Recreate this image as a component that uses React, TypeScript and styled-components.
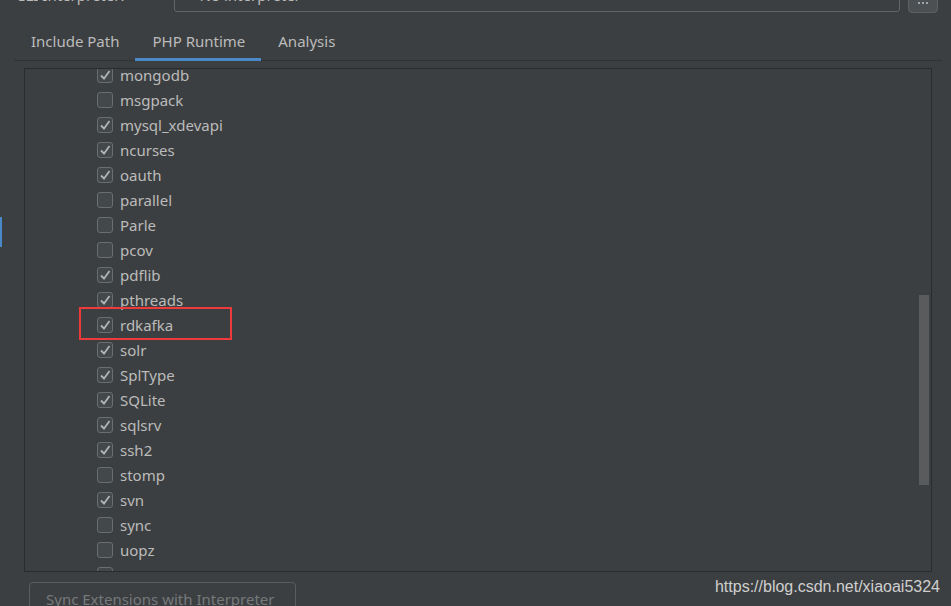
import React from 'react'
import styled, { createGlobalStyle } from 'styled-components'

const GlobalStyle = createGlobalStyle`
  html, body {
    margin: 0;
    padding: 0;
    background: #3c3f41;
    overflow: hidden;
  }
  #root {
    height: 606px;
  }
`

const Page = styled.div`
  position: relative;
  display: flex;
  flex-direction: column;
  width: 951px;
  height: 606px;
  overflow: hidden;
  background: #3c3f41;
  color: #bbbbbb;
  font-family: 'Noto Sans', 'Open Sans', sans-serif;
  font-size: 15px;
`

const TopRow = styled.div`
  display: flex;
  align-items: flex-end;
  height: 34px;
  margin-top: -22px;
  padding-left: 16px;
  flex-shrink: 0;
`

const Label = styled.span`
  width: 158px;
  line-height: 34px;
`

const Combo = styled.div`
  display: flex;
  align-items: center;
  justify-content: space-between;
  width: 726px;
  height: 34px;
  box-sizing: border-box;
  border: 1px solid #646464;
  border-radius: 3px;
  padding: 0 10px 0 16px;
  color: #bbbbbb;
`

const DotsButton = styled.div`
  width: 30px;
  height: 34px;
  margin-left: 8px;
  margin-bottom: -1px;
  box-sizing: border-box;
  border: 1px solid #5e6163;
  border-radius: 4px;
  background: #4c5052;
  display: flex;
  align-items: flex-end;
  justify-content: center;
  padding-bottom: 8px;
  gap: 2px;
`

const Dot = styled.span`
  width: 2px;
  height: 2px;
  background: #9aa7b0;
`

const TabBar = styled.div`
  display: flex;
  align-items: flex-end;
  margin: 15px 9px 0 14px;
  height: 33px;
  border-bottom: 1px solid #323232;
  flex-shrink: 0;
`

const Tab = styled.div<{ $active?: boolean }>`
  padding: 0 16px 4px 17px;
  line-height: 26px;
  color: #bbbbbb;
  border-bottom: 3px solid ${(p) => (p.$active ? '#4a88c7' : 'transparent')};
  margin-bottom: -1px;
`

const Panel = styled.div`
  display: flex;
  margin: 7px 0 0 24px;
  width: 908px;
  height: 504px;
  box-sizing: border-box;
  border: 1px solid #2b2b2b;
  overflow: hidden;
  flex-shrink: 0;
`

const List = styled.div`
  flex: 1;
  display: flex;
  flex-direction: column;
  margin-top: -7px;
  padding-left: 72px;
`

const Row = styled.div`
  display: flex;
  align-items: center;
  gap: 7px;
  height: 25px;
  flex-shrink: 0;
`

const Box = styled.span`
  display: inline-flex;
  align-items: center;
  justify-content: center;
  width: 16px;
  height: 16px;
  box-sizing: border-box;
  border: 1px solid #6b6e70;
  border-radius: 3px;
  background: #43494a;
`

const RowWrap = styled.div`
  position: relative;
`

/* red annotation frame drawn over the rdkafka row */
const Highlight = styled.div`
  position: absolute;
  left: -18px;
  top: -5px;
  width: 153px;
  height: 33px;
  box-sizing: border-box;
  border: 2px solid #ee3a3a;
`

const Track = styled.div`
  width: 12px;
  display: flex;
  flex-direction: column;
`

const Thumb = styled.div`
  width: 10px;
  height: 190px;
  margin-top: 226px;
  background: #595b5d;
`

const Footer = styled.div`
  display: flex;
  align-items: flex-start;
  justify-content: space-between;
  padding: 10px 11px 0 29px;
`

const SyncButton = styled.div`
  width: 267px;
  height: 34px;
  box-sizing: border-box;
  border: 1px solid #5a5d5f;
  border-radius: 4px;
  padding-left: 16px;
  line-height: 32px;
  color: #75797b;
`

const Watermark = styled.span`
  font-family: 'Liberation Sans', Arial, sans-serif;
  font-size: 16px;
  color: #cfcfcf;
  margin-top: -4px;
`

/* selection marker of the settings tree, peeking in at the left edge */
const LeftMark = styled.div`
  position: absolute;
  left: 0;
  top: 217px;
  width: 2px;
  height: 30px;
  background: #4a88c7;
`

const items: [string, boolean][] = [
  ['mongodb', true],
  ['msgpack', false],
  ['mysql_xdevapi', true],
  ['ncurses', true],
  ['oauth', true],
  ['parallel', false],
  ['Parle', false],
  ['pcov', false],
  ['pdflib', true],
  ['pthreads', true],
  ['rdkafka', true],
  ['solr', true],
  ['SplType', true],
  ['SQLite', true],
  ['sqlsrv', true],
  ['ssh2', true],
  ['stomp', false],
  ['svn', true],
  ['sync', false],
  ['uopz', false],
  ['', false],
]

function Check() {
  return (
    <svg width="12" height="12" viewBox="0 0 12 12">
      <polyline points="2,6.5 5,9.5 10.5,2" fill="none" stroke="#b0b4b7" strokeWidth="1.8" />
    </svg>
  )
}

function Item({ name, checked }: { name: string; checked: boolean }) {
  return (
    <Row>
      <Box>{checked && <Check />}</Box>
      <span>{name}</span>
    </Row>
  )
}

export default function App() {
  return (
    <Page>
      <GlobalStyle />
      <LeftMark />
      <TopRow>
        <Label>CLI Interpreter:</Label>
        <Combo>
          <span>&lt;No interpreter&gt;</span>
          <svg width="10" height="6" viewBox="0 0 10 6">
            <polyline points="1,1 5,5 9,1" fill="none" stroke="#9a9a9a" strokeWidth="1.3" />
          </svg>
        </Combo>
        <DotsButton>
          <Dot />
          <Dot />
          <Dot />
        </DotsButton>
      </TopRow>
      <TabBar>
        <Tab>Include Path</Tab>
        <Tab $active>PHP Runtime</Tab>
        <Tab>Analysis</Tab>
      </TabBar>
      <Panel>
        <List>
          {items.map(([name, checked]) =>
            name === 'rdkafka' ? (
              <RowWrap key={name}>
                <Item name={name} checked={checked} />
                <Highlight />
              </RowWrap>
            ) : (
              <Item key={name || 'last'} name={name} checked={checked} />
            ),
          )}
        </List>
        <Track>
          <Thumb />
        </Track>
      </Panel>
      <Footer>
        <SyncButton>Sync Extensions with Interpreter</SyncButton>
        <Watermark>https://blog.csdn.net/xiaoai5324</Watermark>
      </Footer>
    </Page>
  )
}
